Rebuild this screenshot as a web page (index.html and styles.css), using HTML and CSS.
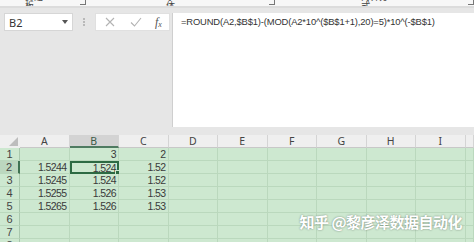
FILE: index.html
```html
<!DOCTYPE html>
<html>
<head>
<meta charset="UTF-8">
<title>Excel ROUND</title>
<link rel="stylesheet" href="styles.css">
</head>
<body>
<div class="ribbon">
  <span class="group-label label-clip">剪贴板</span>
  <span class="launcher l1"></span>
  <span class="group-label label-font">字体</span>
  <span class="launcher l2"></span>
  <span class="group-label label-align">对齐方式</span>
  <span class="launcher l3"></span>
</div>

<div class="formula-row">
  <div class="left-pane">
    <div class="bar-line">
      <div class="name-box">
        <span>B2</span>
        <svg class="dropdown" width="6" height="4" viewBox="0 0 6 4"><path d="M0 0h6L3 4z" fill="#555"/></svg>
      </div>
      <div class="grip"><i></i><i></i><i></i></div>
      <div class="fn-buttons">
        <svg width="10" height="10" viewBox="0 0 10 10"><path d="M1 1l8 8M9 1l-8 8" stroke="#b3b3b3" stroke-width="1.1" fill="none"/></svg>
        <svg width="12" height="10" viewBox="0 0 12 10"><path d="M1 5.5l3.5 3.5L11 1" stroke="#b3b3b3" stroke-width="1.1" fill="none"/></svg>
        <span class="fx">f<sub>x</sub></span>
      </div>
    </div>
  </div>
  <div class="formula-box">=ROUND(A2,$B$1)-(MOD(A2*10^($B$1+1),20)=5)*10^(-$B$1)</div>
</div>

<div class="sheet">
  <div class="corner"><svg width="9" height="9" viewBox="0 0 9 9"><path d="M9 0v9H0z" fill="#bdbdbd"/></svg></div>
  <div class="col-head">A</div>
  <div class="col-head active">B</div>
  <div class="col-head">C</div>
  <div class="col-head">D</div>
  <div class="col-head">E</div>
  <div class="col-head">F</div>
  <div class="col-head">G</div>
  <div class="col-head">H</div>
  <div class="col-head">I</div>
  <div class="col-head"></div>

  <div class="row-head">1</div>
  <div class="cell"></div><div class="cell">3</div><div class="cell">2</div>
  <div class="cell"></div><div class="cell"></div><div class="cell"></div><div class="cell"></div><div class="cell"></div><div class="cell"></div><div class="cell"></div>

  <div class="row-head active">2</div>
  <div class="cell">1.5244</div><div class="cell selected">1.524<span class="handle"></span></div><div class="cell">1.52</div>
  <div class="cell"></div><div class="cell"></div><div class="cell"></div><div class="cell"></div><div class="cell"></div><div class="cell"></div><div class="cell"></div>

  <div class="row-head">3</div>
  <div class="cell">1.5245</div><div class="cell">1.524</div><div class="cell">1.52</div>
  <div class="cell"></div><div class="cell"></div><div class="cell"></div><div class="cell"></div><div class="cell"></div><div class="cell"></div><div class="cell"></div>

  <div class="row-head">4</div>
  <div class="cell">1.5255</div><div class="cell">1.526</div><div class="cell">1.53</div>
  <div class="cell"></div><div class="cell"></div><div class="cell"></div><div class="cell"></div><div class="cell"></div><div class="cell"></div><div class="cell"></div>

  <div class="row-head">5</div>
  <div class="cell">1.5265</div><div class="cell">1.526</div><div class="cell">1.53</div>
  <div class="cell"></div><div class="cell"></div><div class="cell"></div><div class="cell"></div><div class="cell"></div><div class="cell"></div><div class="cell"></div>

  <div class="row-head">6</div>
  <div class="cell"></div><div class="cell"></div><div class="cell"></div>
  <div class="cell"></div><div class="cell"></div><div class="cell"></div><div class="cell"></div><div class="cell"></div><div class="cell"></div><div class="cell"></div>

  <div class="row-head">7</div>
  <div class="cell"></div><div class="cell"></div><div class="cell"></div>
  <div class="cell"></div><div class="cell"></div><div class="cell"></div><div class="cell"></div><div class="cell"></div><div class="cell"></div><div class="cell"></div>

  <div class="row-head">8</div>
  <div class="cell"></div><div class="cell"></div><div class="cell"></div>
  <div class="cell"></div><div class="cell"></div><div class="cell"></div><div class="cell"></div><div class="cell"></div><div class="cell"></div><div class="cell"></div>

  <div class="watermark">知乎 @黎彦泽数据自动化</div>
</div>
</body>
</html>
```

FILE: styles.css
```css
body {
    margin: 0px;
    padding: 0px;
    width: 474px;
    height: 242px;
    overflow: hidden;
    background-color: #e6e6e6;
    font-family: "Liberation Sans", "Noto Sans CJK SC", sans-serif;
    color: #333;
}

.ribbon {
    display: flex;
    align-items: flex-end;
    height: 6px;
    background-color: #f7f7f7;
    border-bottom: 2px solid #dcdcdc;
    overflow: hidden;
}

.group-label {
    font-family: "Noto Sans CJK SC", sans-serif;
    font-size: 9px;
    line-height: 9px;
    color: #444;
    margin-bottom: -4px;
}

.label-clip { margin-left: 25px; }
.label-font { margin-left: 80px; }
.label-align { margin-left: 86px; }

.launcher {
    width: 5px;
    height: 5px;
    border-right: 1px solid #777;
    border-bottom: 1px solid #777;
    margin-bottom: 1px;
}

.l1 { margin-left: 29px; }
.l2 { margin-left: 86px; }
.l3 { margin-left: 72px; }

.formula-row {
    display: flex;
    margin-top: 5px;
}

.left-pane {
    width: 172px;
    flex-shrink: 0;
}

.bar-line {
    display: flex;
    align-items: center;
    padding-left: 4px;
}

.name-box {
    width: 69px;
    height: 18px;
    box-sizing: border-box;
    background-color: #fff;
    border: 1px solid #d6d6d6;
    display: flex;
    align-items: center;
    justify-content: space-between;
    padding: 0 4px 0 4px;
    font-family: "Noto Sans", sans-serif;
    font-size: 11px;
    color: #333;
}

.grip {
    width: 22px;
    display: flex;
    flex-direction: column;
    align-items: center;
    gap: 1px;
}

.grip i {
    width: 2px;
    height: 2px;
    background-color: #b9b9b9;
}

.fn-buttons {
    width: 75px;
    height: 18px;
    box-sizing: border-box;
    background-color: #fff;
    border: 1px solid #e0e0e0;
    display: flex;
    align-items: center;
    padding-left: 9px;
    gap: 15px;
}

.fx {
    font-family: "Liberation Serif", serif;
    font-style: italic;
    font-size: 12px;
    color: #555;
    margin-left: -2px;
}

.fx sub {
    font-size: 8px;
    vertical-align: -1px;
}

.formula-box {
    flex: 1;
    height: 114px;
    box-sizing: border-box;
    background-color: #fff;
    border-left: 1px solid #cfcfcf;
    padding: 3px 0 0 8px;
    font-family: "Liberation Sans", sans-serif;
    font-size: 9.4px;
    letter-spacing: -0.15px;
    color: #333;
}

.sheet {
    position: relative;
    display: grid;
    grid-template-columns: 20px repeat(9, 49.5px) 1fr;
    grid-auto-rows: 13px;
    margin-top: 8px;
}

.corner {
    background-color: #efefef;
    display: flex;
    align-items: flex-end;
    justify-content: flex-end;
    padding: 0 2px 2px 0;
    box-sizing: border-box;
}

.col-head {
    background-color: #efefef;
    border-right: 1px solid #d4d4d4;
    border-bottom: 1px solid #c8c8c8;
    box-sizing: border-box;
    text-align: center;
    font-family: "Noto Sans", sans-serif;
    font-size: 10.5px;
    line-height: 12px;
    color: #444;
}

.col-head.active {
    background-color: #d3d3d3;
    border-bottom: 2px solid #4f7b61;
    color: #3d5c48;
}

.row-head {
    background-color: #cde8d0;
    border-right: 1px solid #a9c7ad;
    border-bottom: 1px solid #bad8bd;
    box-sizing: border-box;
    text-align: center;
    font-size: 11px;
    line-height: 13px;
    color: #444;
}

.row-head.active {
    background-color: #bcd7bf;
    border-right: 2px solid #3f7352;
}

.cell {
    position: relative;
    background-color: #cde8d0;
    border-right: 1px solid #bad8bd;
    border-bottom: 1px solid #bad8bd;
    box-sizing: border-box;
    text-align: right;
    padding-right: 2px;
    font-size: 10.5px;
    letter-spacing: -0.6px;
    line-height: 13px;
    color: #3a3a3a;
}

.cell.selected {
    border: 2px solid #2d6a43;
    line-height: 10px;
    padding-right: 1px;
}

.handle {
    position: absolute;
    right: -4px;
    bottom: -4px;
    width: 4px;
    height: 4px;
    background-color: #2d6a43;
    border: 1px solid #cde8d0;
}

.watermark {
    position: absolute;
    right: 12px;
    top: 76px;
    font-family: "Noto Sans CJK SC", sans-serif;
    font-size: 15px;
    font-weight: bold;
    color: #fff;
    text-shadow: 0 0 2px rgba(0, 0, 0, 0.45);
    letter-spacing: -0.5px;
}
```
